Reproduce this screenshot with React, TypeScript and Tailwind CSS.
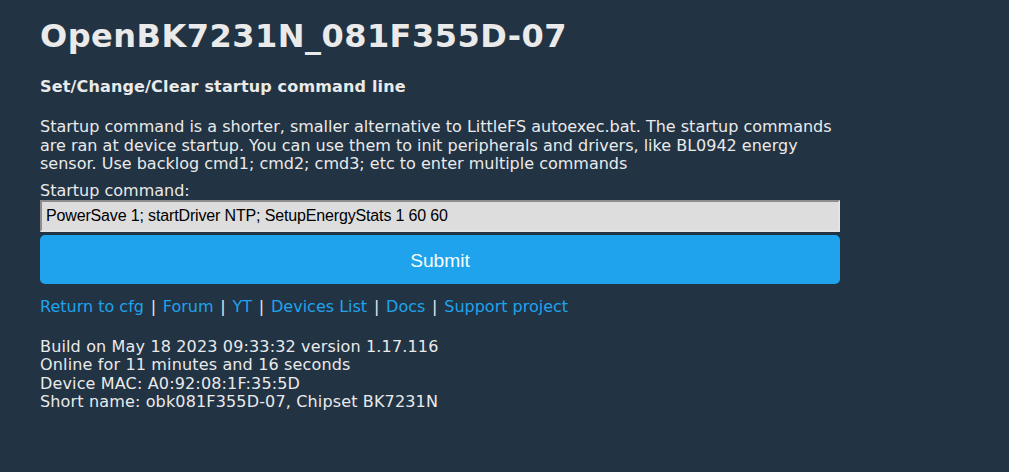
import React from "react";

const LINKS = ["Return to cfg", "Forum", "YT", "Devices List", "Docs", "Support project"];

const INFO = [
  "Build on May 18 2023 09:33:32 version 1.17.116",
  "Online for 11 minutes and 16 seconds",
  "Device MAC: A0:92:08:1F:35:5D",
  "Short name: obk081F355D-07, Chipset BK7231N",
];

export default function App() {
  return (
    <div className="min-h-screen w-full bg-[#223344] pl-[40px] pt-[18px] font-['DejaVu_Sans',Verdana,sans-serif] text-[16px] leading-[18.5px] text-[#eaeaea]">
      <div className="w-[800px]">
        <h1 className="text-[32px] font-bold leading-[37px] tracking-[0.48px]">OpenBK7231N_081F355D-07</h1>
        <h4 className="mt-[23px] font-bold tracking-[0.16px]">Set/Change/Clear startup command line</h4>
        <p className="mt-[21.7px]">
          Startup command is a shorter, smaller alternative to LittleFS autoexec.bat. The startup
          commands are ran at device startup. You can use them to init peripherals and drivers, like
          BL0942 energy sensor. Use backlog cmd1; cmd2; cmd3; etc to enter multiple commands
        </p>
        <form className="flex flex-col" onSubmit={(e) => e.preventDefault()}>
          <label className="mt-[8.8px] block">Startup command:</label>
          <input
            type="text"
            defaultValue="PowerSave 1; startDriver NTP; SetupEnergyStats 1 60 60"
            className="-mt-px h-[32.5px] w-full border-2 border-t-[#8d8d8d] border-l-[#8d8d8d] border-b-[#e4e4e4] border-r-[#e4e4e4] bg-[#dddddd] pl-[4px] pr-[5px] font-['Liberation_Sans',Arial,sans-serif] text-[16px] tracking-[-0.15px] text-black outline-none"
          />
          <button
            type="submit"
            className="mt-[3px] h-[49px] w-full rounded-[5px] bg-[#1fa3ec] pt-[3px] font-['Liberation_Sans',Arial,sans-serif] text-[19.2px] text-[#faffff]"
          >
            Submit
          </button>
        </form>
        <div className="mt-[13.7px] whitespace-pre">
          {LINKS.map((l, i) => (
            <React.Fragment key={l}>
              {i > 0 && <span className="px-[1.7px]"> | </span>}
              <a href="#" className="text-[#1fa3ec] no-underline">
                {l}
              </a>
            </React.Fragment>
          ))}
        </div>
        <div className="mt-[21.5px] leading-[18.3px] tracking-[0.15px]">
          {INFO.map((line) => (
            <div key={line}>{line}</div>
          ))}
        </div>
      </div>
    </div>
  );
}
